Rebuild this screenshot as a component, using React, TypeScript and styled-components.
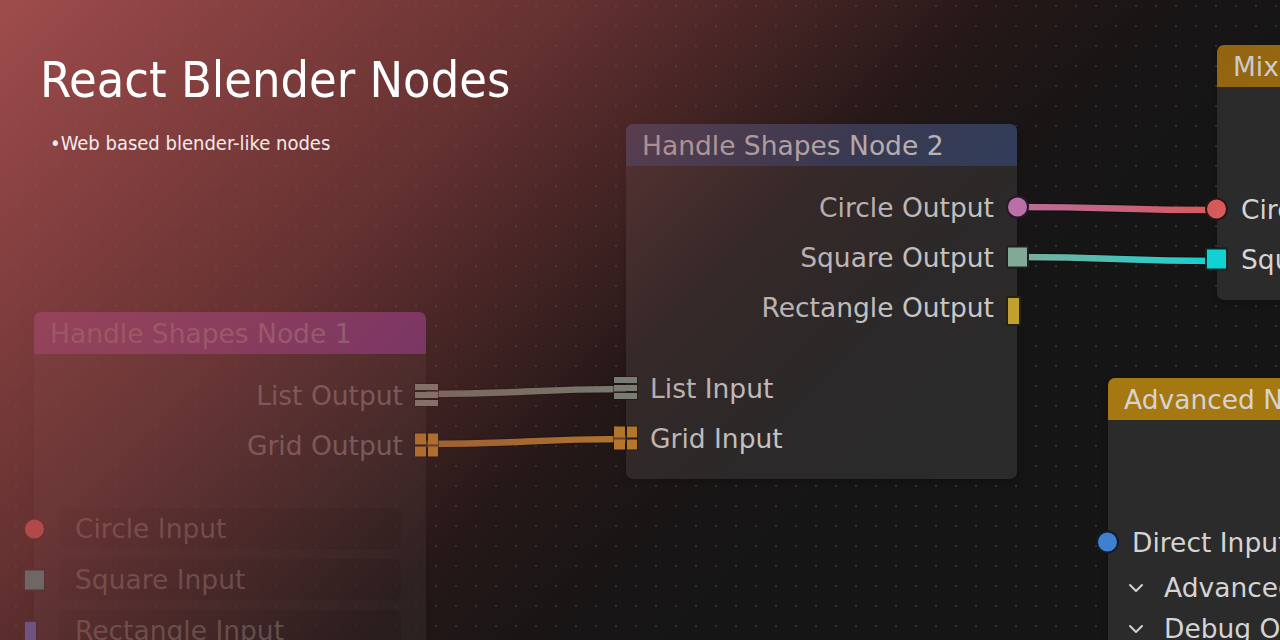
import React from 'react'
import styled, { createGlobalStyle } from 'styled-components'

type Shape = 'circle' | 'square' | 'rect' | 'list' | 'grid'
type Side = 'left' | 'right'

interface Port {
    label: string,
    shape: Shape,
    color: string
}

interface NodeSpec {
    id: string,
    title: string,
    x: number,
    y: number,
    w: number,
    header: string,
    dim?: boolean,
    outputs: Port[],
    inputs: Port[],
    fields?: Port[],
    groups?: string[]
}

const GlobalStyle = createGlobalStyle`
    html, body {
        margin: 0;
        padding: 0;
        background: #151515;
    }

    body {
        font-family: "DejaVu Sans", "Liberation Sans", sans-serif;
        overflow: hidden;
    }
`

const nodes: NodeSpec[] = [
    {
        id: 'n1',
        title: 'Handle Shapes Node 1',
        x: 34, y: 312, w: 392,
        header: '#74348a',
        dim: true,
        outputs: [
            { label: 'List Output', shape: 'list', color: '#8a9c8c' },
            { label: 'Grid Output', shape: 'grid', color: '#d2902e' }
        ],
        inputs: [],
        fields: [
            { label: 'Circle Input', shape: 'circle', color: '#d85858' },
            { label: 'Square Input', shape: 'square', color: '#3a9e9c' },
            { label: 'Rectangle Input', shape: 'rect', color: '#4a6ad8' }
        ]
    },
    {
        id: 'n2',
        title: 'Handle Shapes Node 2',
        x: 626, y: 124, w: 391,
        header: '#304262',
        outputs: [
            { label: 'Circle Output', shape: 'circle', color: '#c878b8' },
            { label: 'Square Output', shape: 'square', color: '#88b3a0' },
            { label: 'Rectangle Output', shape: 'rect', color: '#c8a830' }
        ],
        inputs: [
            { label: 'List Input', shape: 'list', color: '#84998a' },
            { label: 'Grid Input', shape: 'grid', color: '#cc8c30' }
        ]
    },
    {
        id: 'mix',
        title: 'Mix Node',
        x: 1217, y: 45, w: 320,
        header: '#9a6a10',
        outputs: [
            { label: 'Result', shape: 'circle', color: '#d85858' }
        ],
        inputs: [
            { label: 'Circle Input', shape: 'circle', color: '#d85a5a' },
            { label: 'Square Input', shape: 'square', color: '#10d2d2' }
        ]
    },
    {
        id: 'adv',
        title: 'Advanced Node',
        x: 1108, y: 378, w: 360,
        header: '#a67812',
        outputs: [
            { label: 'Output', shape: 'circle', color: '#3f80d0' }
        ],
        inputs: [
            { label: 'Direct Input', shape: 'circle', color: '#3f80d0' }
        ],
        groups: ['Advanced Options', 'Debug Options']
    }
]

interface Wire {
    from: [number, number],
    to: [number, number],
    c1: string,
    c2: string
}

const wires: Wire[] = [
    { from: [426, 394], to: [626, 389], c1: '#7c8a7c', c2: '#84968a' },
    { from: [426, 444], to: [626, 439], c1: '#b87c36', c2: '#c88a36' },
    { from: [1017, 207], to: [1217, 210], c1: '#c874a8', c2: '#d85a5a' },
    { from: [1017, 257], to: [1217, 261], c1: '#84b8a2', c2: '#10d2d2' }
]

function wirePath(w: Wire) {
    const [x1, y1] = w.from
    const [x2, y2] = w.to
    const dx = (x2 - x1) * 0.5
    return `M ${x1} ${y1} C ${x1 + dx} ${y1}, ${x2 - dx} ${y2}, ${x2} ${y2}`
}

// offset = where the handle's outer edge sits from the row edge
const Handle: React.FC<{ port: Port, side: Side, offset?: number }> = ({ port, side, offset = -12 }) => {
    if (port.shape === 'list') {
        return (
            <ListHandle $side={side} $offset={offset}>
                <Bar $color={port.color} />
                <Bar $color={port.color} />
                <Bar $color={port.color} />
            </ListHandle>
        )
    }
    if (port.shape === 'grid') {
        return (
            <GridHandle $side={side} $offset={offset}>
                <Cell $color={port.color} />
                <Cell $color={port.color} />
                <Cell $color={port.color} />
                <Cell $color={port.color} />
            </GridHandle>
        )
    }
    return <ShapeHandle $side={side} $offset={offset} $shape={port.shape} $color={port.color} />
}

const Chevron = () => (
    <svg width="24" height="24" viewBox="0 0 24 24" fill="none" stroke="#d0d0d0" strokeWidth="2" strokeLinecap="round" strokeLinejoin="round">
        <path d="M6 9l6 6 6-6" />
    </svg>
)

const NodeCard: React.FC<{ node: NodeSpec }> = ({ node }) => (
    <Card $dim={!!node.dim} style={{ left: node.x, top: node.y, width: node.w }}>
        <Header $color={node.header}>{node.title}</Header>
        <Body>
            {node.outputs.map(p => (
                <OutRow key={p.label}>
                    {p.label}
                    <Handle port={p} side="right" />
                </OutRow>
            ))}
            {node.inputs.length > 0 && <Spacer />}
            {node.inputs.map(p => (
                <InRow key={p.label}>
                    <Handle port={p} side="left" />
                    {p.label}
                </InRow>
            ))}
            {node.fields && <FieldSpacer />}
            {node.fields && node.fields.map(p => (
                <FieldRow key={p.label}>
                    <Handle port={p} side="left" offset={-36} />
                    <Field>{p.label}</Field>
                </FieldRow>
            ))}
            {node.groups && node.groups.map(g => (
                <GroupRow key={g}>
                    <Chevron />
                    {g}
                </GroupRow>
            ))}
        </Body>
    </Card>
)

const App: React.FC = () => {
    return (
        <React.Fragment>
            <GlobalStyle />
            <Stage>
                <Wires width="1280" height="640" viewBox="0 0 1280 640">
                    <defs>
                        {wires.map((w, i) => (
                            <linearGradient key={i} id={`wire${i}`} gradientUnits="userSpaceOnUse" x1={w.from[0]} y1={0} x2={w.to[0]} y2={0}>
                                <stop offset="0" stopColor={w.c1} />
                                <stop offset="1" stopColor={w.c2} />
                            </linearGradient>
                        ))}
                    </defs>
                    {wires.map((w, i) => (
                        <g key={i}>
                            <path d={wirePath(w)} stroke="rgba(10,10,10,0.55)" strokeWidth="8.5" fill="none" />
                            <path d={wirePath(w)} stroke={`url(#wire${i})`} strokeWidth="6.5" fill="none" />
                        </g>
                    ))}
                </Wires>
                {nodes.map(n => <NodeCard key={n.id} node={n} />)}
                <Glow />
                <Hero>
                    <h1>React Blender Nodes</h1>
                    <ul>
                        <li>Web based blender-like nodes</li>
                    </ul>
                </Hero>
            </Stage>
        </React.Fragment>
    )
}

const Stage = styled.main`
    position: relative;
    width: 1280px;
    height: 640px;
    overflow: hidden;
    background-color: #151515;
    background-image: radial-gradient(circle, rgba(255, 255, 255, 0.13) 0.9px, transparent 1.3px);
    background-size: 20px 20px;
    background-position: 6px -4px;
`

const Wires = styled.svg`
    position: absolute;
    left: 0;
    top: 0;
`

const Card = styled.section<{ $dim: boolean }>`
    position: absolute;
    background: ${p => p.$dim ? 'rgba(43, 43, 43, 0.6)' : '#2b2b2b'};
    border-radius: 7px;
    box-shadow: 0 2px 6px rgba(0, 0, 0, 0.25);
    font-size: 26.5px;
    color: ${p => p.$dim ? 'rgba(200, 200, 200, 0.5)' : '#d4d4d4'};
`

const Header = styled.header<{ $color: string }>`
    height: 42px;
    display: flex;
    align-items: center;
    padding: 0 16px;
    background: ${p => p.$color};
    border-radius: 7px 7px 0 0;
    white-space: nowrap;
    overflow: hidden;
`

const Body = styled.div`
    display: flex;
    flex-direction: column;
    padding: 16px 0;
`

const OutRow = styled.div`
    position: relative;
    height: 50px;
    display: flex;
    align-items: center;
    justify-content: flex-end;
    padding-right: 23px;
    white-space: nowrap;
`

const InRow = styled.div`
    position: relative;
    height: 50px;
    display: flex;
    align-items: center;
    padding-left: 24px;
    white-space: nowrap;
`

const Spacer = styled.div`
    height: 31px;
`

const FieldSpacer = styled.div`
    height: 38px;
`

const FieldRow = styled.div`
    position: relative;
    margin: 0 25px 10px;
    height: 41px;
`

const Field = styled.div`
    height: 100%;
    display: flex;
    align-items: center;
    padding-left: 16px;
    border-radius: 7px;
    background: rgba(0, 0, 0, 0.14);
    color: rgba(190, 190, 190, 0.42);
    white-space: nowrap;
`

const GroupRow = styled.div`
    height: 41px;
    display: flex;
    align-items: center;
    gap: 16px;
    padding-left: 16px;
    white-space: nowrap;
`

const edge = (side: Side, offset: number) => side === 'left' ? `left: ${offset}px;` : `right: ${offset}px;`

const ShapeHandle = styled.span<{ $side: Side, $offset: number, $shape: Shape, $color: string }>`
    position: absolute;
    top: 50%;
    box-sizing: border-box;
    ${p => edge(p.$side, p.$offset)}
    width: ${p => p.$shape === 'rect' ? 15 : 23}px;
    height: ${p => p.$shape === 'rect' ? 30 : 23}px;
    margin-right: ${p => p.$shape === 'rect' && p.$side === 'right' ? 8 : 0}px;
    transform: translateY(${p => p.$shape === 'rect' ? '-37%' : '-50%'});
    background: ${p => p.$color};
    border: 2px solid rgba(12, 10, 10, 0.85);
    border-radius: ${p => p.$shape === 'circle' ? '50%' : '1px'};
`

const ListHandle = styled.span<{ $side: Side, $offset: number }>`
    position: absolute;
    top: 50%;
    ${p => edge(p.$side, p.$offset)}
    transform: translateY(-50%);
    width: 23px;
    display: flex;
    flex-direction: column;
    gap: 2px;
`

const Bar = styled.span<{ $color: string }>`
    height: 6px;
    background: ${p => p.$color};
    box-shadow: 0 0 0 1px rgba(12, 10, 10, 0.5);
`

const GridHandle = styled.span<{ $side: Side, $offset: number }>`
    position: absolute;
    top: 50%;
    ${p => edge(p.$side, p.$offset)}
    transform: translateY(-50%);
    width: 23px;
    height: 23px;
    display: grid;
    grid-template-columns: 1fr 1fr;
    gap: 2px;
`

const Cell = styled.span<{ $color: string }>`
    background: ${p => p.$color};
    box-shadow: 0 0 0 1px rgba(12, 10, 10, 0.5);
`

const Glow = styled.div`
    position: absolute;
    inset: 0;
    pointer-events: none;
    background: linear-gradient(135deg,
        rgba(170, 80, 80, 0.93) 0%,
        rgba(165, 76, 76, 0.8) 12%,
        rgba(150, 66, 66, 0.62) 30%,
        rgba(125, 54, 54, 0.44) 42%,
        rgba(85, 32, 32, 0.25) 52%,
        rgba(50, 22, 22, 0.1) 62%,
        rgba(30, 20, 20, 0) 75%);
`

const Hero = styled.div`
    position: absolute;
    left: 0;
    top: 0;
    padding: 51px 0 0 40px;
    color: #ffffff;
    font-family: "DejaVu Sans Condensed", "DejaVu Sans", sans-serif;
    font-stretch: condensed;

    h1 {
        margin: 0;
        font-size: 50px;
        line-height: 58px;
        font-weight: normal;
    }

    ul {
        margin: 22px 0 0;
        padding: 0 0 0 10px;
        list-style: none;
    }

    li {
        font-size: 20px;
        line-height: 24px;
        color: #f4eaea;
    }

    li::before {
        content: '•';
    }
`

export default App
